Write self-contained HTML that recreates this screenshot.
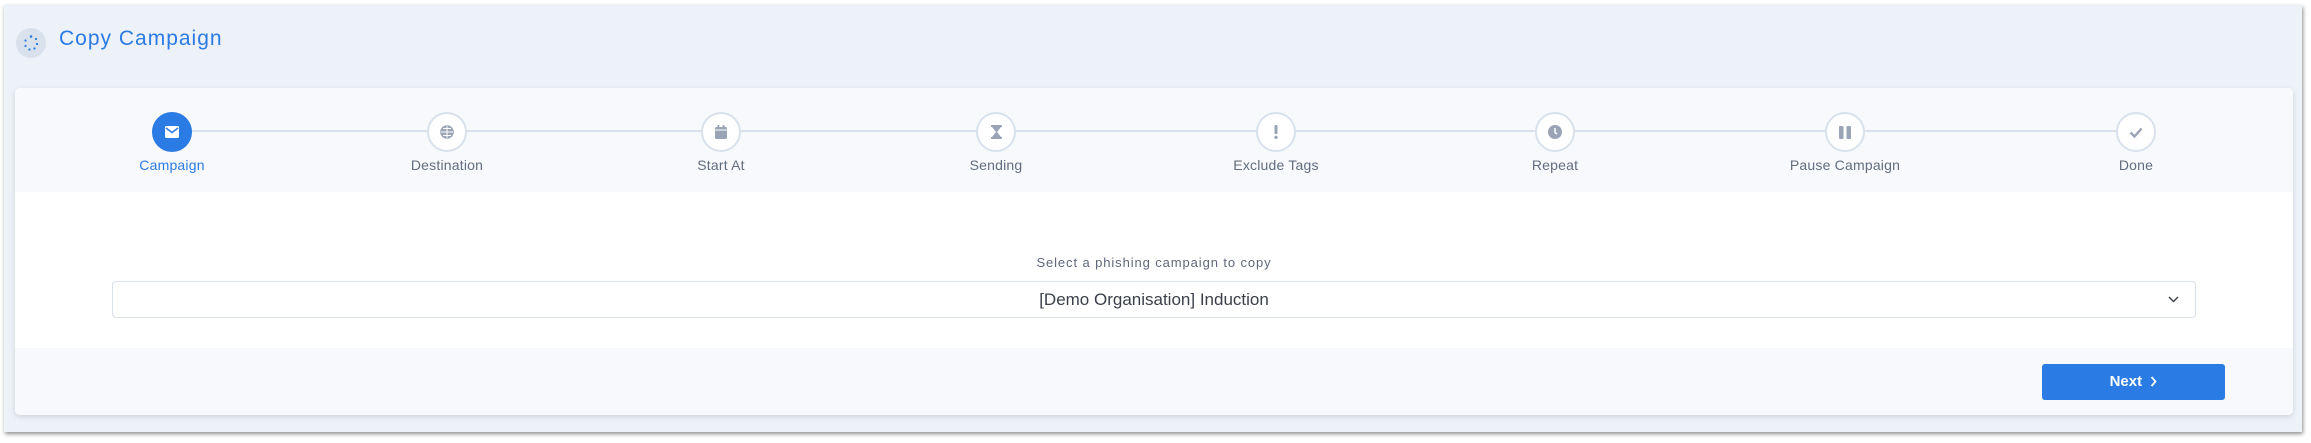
<!DOCTYPE html>
<html><head><meta charset="utf-8"><style>
*{box-sizing:border-box;margin:0;padding:0}
body{width:2311px;height:443px;background:#fff;position:relative;overflow:hidden;font-family:"Liberation Sans",sans-serif}
.outer{position:absolute;left:4px;top:5px;width:2298px;height:427px;background:#edf1f8;box-shadow:1px 2px 4px rgba(0,0,0,.45)}
.hicon{position:absolute;left:12px;top:23px;width:30px;height:30px;border-radius:50%;background:#d9e1ec}
.title{position:absolute;left:55px;top:22px;font-size:21px;letter-spacing:1px;color:#2b7be4}
.card{position:absolute;left:15px;top:88px;width:2278px;height:327px;background:#fff;border-radius:5px;box-shadow:0 2px 6px rgba(0,0,0,.12);overflow:hidden}
.step{position:absolute;left:0;top:0;width:2278px;height:104px;background:#f7f9fc}
.line{position:absolute;left:157px;top:42px;width:1964px;height:2px;background:#d9e1ec}
.c{position:absolute;top:24px;width:40px;height:40px;margin-left:-20px;border-radius:50%;background:#fff;border:2px solid #d9e1ec;display:flex;align-items:center;justify-content:center}
.c.a{background:#2b7be4;border-color:#2b7be4}
.l{position:absolute;top:69px;width:200px;margin-left:-100px;text-align:center;font-size:14px;color:#626d80;letter-spacing:.2px}
.l.a{color:#2b7be4}
.lab{position:absolute;left:0;width:2278px;top:167px;text-align:center;font-size:13px;color:#5f687a;letter-spacing:.9px}
.sel{position:absolute;left:97px;top:193px;width:2084px;height:37px;border:1px solid #d9e1ec;border-radius:4px;text-align:center;line-height:35px;font-size:17px;color:#3a3f4a}
.foot{position:absolute;left:0;top:260px;width:2278px;height:67px;background:#f7f9fc}
.btn{position:absolute;left:2027px;top:276px;width:183px;height:36px;background:#2b7be4;border-radius:3px;color:#fff;font-weight:bold;font-size:15px;text-align:center;line-height:36px}
</style></head><body>
<div class="outer">
<div class="hicon"><svg width="30" height="30" viewBox="0 0 30 30" fill="#2b7be4"><circle cx="15" cy="8.5" r="1.3"/><circle cx="20" cy="11" r="1.1"/><circle cx="21" cy="16" r="1.1"/><circle cx="18.5" cy="20.5" r="1.1"/><circle cx="13.5" cy="21.5" r="1.1"/><circle cx="9.5" cy="18" r="1.1"/><circle cx="9.5" cy="12.5" r="1.1"/></svg></div>
<div class="title">Copy Campaign</div>
</div>
<div class="card">
<div class="step">
<div class="line"></div>
<div class="c a" style="left:157px"><svg width="14" height="12" viewBox="0 0 14 12"><rect x="0" y="0" width="14" height="12" rx="1.5" fill="#fff"/><path d="M1 2l6 4.5L13 2" stroke="#2b7be4" stroke-width="1.5" fill="none"/></svg></div>
<div class="c" style="left:432px"><svg width="14" height="14" viewBox="0 0 14 14" fill="none" stroke="#9aa4b4" stroke-width="1.6"><circle cx="7" cy="7" r="6" fill="#9aa4b4"/><path d="M1 7h12M7 1v12M3 3.5h8M3 10.5h8" stroke="#fff" stroke-width="1"/></svg></div>
<div class="c" style="left:706px"><svg width="12" height="14" viewBox="0 0 12 14"><rect x="0" y="2" width="12" height="12" rx="1.5" fill="#9aa4b4"/><rect x="2.5" y="0" width="1.8" height="3.5" fill="#9aa4b4"/><rect x="7.7" y="0" width="1.8" height="3.5" fill="#9aa4b4"/><rect x="0" y="4.5" width="12" height="1" fill="#fff"/></svg></div>
<div class="c" style="left:981px"><svg width="11" height="14" viewBox="0 0 11 14" fill="#9aa4b4"><rect x="0" y="0" width="11" height="2"/><rect x="0" y="12" width="11" height="2"/><path d="M1 2h9L6 7l4 5H1l4-5z"/></svg></div>
<div class="c" style="left:1261px"><svg width="4" height="14" viewBox="0 0 4 14" fill="#9aa4b4"><rect x="0.5" y="0" width="3" height="9" rx="1"/><circle cx="2" cy="12.3" r="1.7"/></svg></div>
<div class="c" style="left:1540px"><svg width="14" height="14" viewBox="0 0 14 14"><circle cx="7" cy="7" r="7" fill="#9aa4b4"/><path d="M7 3v4.5l2 1.5" stroke="#fff" stroke-width="1.5" fill="none"/></svg></div>
<div class="c" style="left:1830px"><svg width="12" height="13" viewBox="0 0 12 13" fill="#9aa4b4"><rect x="0" y="0" width="4.5" height="13" rx="1"/><rect x="7.5" y="0" width="4.5" height="13" rx="1"/></svg></div>
<div class="c" style="left:2121px"><svg width="14" height="11" viewBox="0 0 14 11"><path d="M1.5 5.5l4 4 7-8" stroke="#9aa4b4" stroke-width="2.4" fill="none"/></svg></div>
<div class="l a" style="left:157px">Campaign</div>
<div class="l" style="left:432px">Destination</div>
<div class="l" style="left:706px">Start At</div>
<div class="l" style="left:981px">Sending</div>
<div class="l" style="left:1261px">Exclude Tags</div>
<div class="l" style="left:1540px">Repeat</div>
<div class="l" style="left:1830px">Pause Campaign</div>
<div class="l" style="left:2121px">Done</div>
</div>
<div class="lab">Select a phishing campaign to copy</div>
<div class="sel">[Demo Organisation] Induction<svg style="position:absolute;right:16px;top:14px" width="11" height="7" viewBox="0 0 11 7"><path d="M1 1l4.5 4.5L10 1" stroke="#3a3f4a" stroke-width="1.4" fill="none"/></svg></div>
<div class="foot"></div>
<div class="btn">Next &nbsp;<svg width="7" height="11" viewBox="0 0 7 11" style="vertical-align:-1px"><path d="M1.5 1l4 4.5-4 4.5" stroke="#fff" stroke-width="1.8" fill="none"/></svg></div>
</div>
</body></html>
